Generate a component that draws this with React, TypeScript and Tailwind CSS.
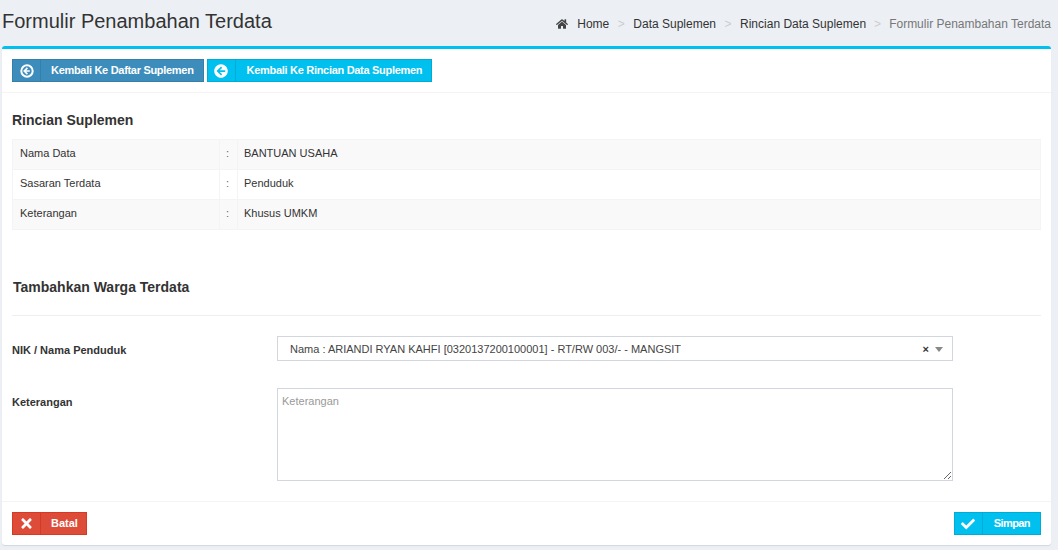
import React from "react";
import { FaHome, FaArrowCircleLeft, FaTimes, FaCheck } from "react-icons/fa";

function CircleLeftOutline() {
  return (
    <svg width="14" height="14" viewBox="0 0 14 14" aria-hidden="true">
      <circle cx="7" cy="7" r="5.7" fill="none" stroke="white" strokeWidth="2" />
      <path d="M7.4 3.9 4.3 7l3.1 3.1M4.6 7h5.2" fill="none" stroke="white" strokeWidth="1.7" />
    </svg>
  );
}

function IconButton({
  icon,
  label,
  colors,
  divider,
  textCls = "",
}: {
  icon: React.ReactNode;
  label: string;
  colors: string;
  divider: string;
  textCls?: string;
}) {
  return (
    <button className={`flex h-[23px] items-stretch border text-[11px] font-bold text-white ${colors}`}>
      <span className={`flex w-7 items-center justify-center border-r ${divider}`}>{icon}</span>
      <span className={`flex items-center ${textCls}`}>{label}</span>
    </button>
  );
}

const rows = [
  ["Nama Data", "BANTUAN USAHA", "bg-[#f9f9f9]"],
  ["Sasaran Terdata", "Penduduk", "bg-white"],
  ["Keterangan", "Khusus UMKM", "bg-[#f9f9f9]"],
];

export default function App() {
  return (
    <div
      className="h-[550px] w-[1058px] overflow-hidden bg-[#ecf0f5] text-[#333]"
      style={{ fontFamily: '"Liberation Sans", Arial, sans-serif' }}
    >
      <header className="flex h-[46px] items-start justify-between pl-[2px] pr-[7px]">
        <h1 className="pt-[8px] text-[20px] leading-[26px] font-normal">Formulir Penambahan Terdata</h1>
        <nav className="flex items-center pt-[17px] text-[12px] leading-[14px]">
          <FaHome className="mr-[9px] text-[12px] text-[#444]" />
          <span>Home</span>
          <span className="px-[8.5px] text-[#ccc]">&gt;</span>
          <span>Data Suplemen</span>
          <span className="px-[8.5px] text-[#ccc]">&gt;</span>
          <span>Rincian Data Suplemen</span>
          <span className="px-[8px] text-[#ccc]">&gt;</span>
          <span className="text-[#777]">Formulir Penambahan Terdata</span>
        </nav>
      </header>

      <main className="ml-[2px] flex h-[499px] w-[1049px] flex-col rounded-[3px] border-t-[3px] border-[#00c0ef] bg-white shadow-[0_1px_1px_rgba(0,0,0,0.1)]">
        <div className="flex h-[44px] gap-[3px] border-b border-[#f4f4f4] px-[10px] pt-[10px]">
          <IconButton
            icon={<CircleLeftOutline />}
            label="Kembali Ke Daftar Suplemen"
            colors="border-[#367fa9] bg-[#3c8dbc]"
            divider="border-[#367fa9]"
            textCls="pl-[10px] pr-[9px] tracking-[-0.3px]"
          />
          <IconButton
            icon={<FaArrowCircleLeft className="text-[14px]" />}
            label="Kembali Ke Rincian Data Suplemen"
            colors="border-[#00acd6] bg-[#00c0ef]"
            divider="border-[#00acd6]"
            textCls="pl-[11px] pr-[9px] tracking-[-0.3px]"
          />
        </div>

        <section className="px-[10px]">
          <h3 className="mt-[18px] text-[14px] leading-[18px] font-bold text-[#333]">Rincian Suplemen</h3>
          <table className="mt-[10px] w-[1029px] table-fixed border-collapse border border-[#f4f4f4] text-[11px] text-[#333]">
            <tbody>
              {rows.map(([k, v, bg]) => (
                <tr key={k} className={`h-[30px] ${bg}`}>
                  <td className="w-[207px] border border-[#f4f4f4] pb-[2px] pl-[7px]">{k}</td>
                  <td className="w-[18px] border border-[#f4f4f4] pb-[2px] pr-[2px] text-center text-[#666]">:</td>
                  <td className="border border-[#f4f4f4] pb-[2px] pl-[6px]">{v}</td>
                </tr>
              ))}
            </tbody>
          </table>

          <h3 className="mt-[48px] pl-[1px] text-[14px] leading-[18px] font-bold text-[#333]">Tambahkan Warga Terdata</h3>
          <div className="mt-[19px] w-[1029px] border-t border-[#eee]" />

          <form className="mt-[20px]">
            <div className="flex items-center">
              <label className="w-[265px] pt-[3px] text-[11px] font-bold text-[#333]">NIK / Nama Penduduk</label>
              <div className="flex h-[25px] w-[676px] items-center border border-[#d2d6de] pl-[12px] pr-[9px] pt-[1px] text-[11px] text-[#444]">
                <span className="flex-1">Nama : ARIANDI RYAN KAHFI [0320137200100001] - RT/RW 003/- - MANGSIT</span>
                <span className="mr-[6px] text-[11px] leading-none font-bold text-[#333]">×</span>
                <span className="mt-[1px] h-0 w-0 border-x-[4px] border-t-[5px] border-x-transparent border-t-[#888]" />
              </div>
            </div>
            <div className="mt-[27px] flex items-start">
              <label className="w-[265px] pt-[6px] text-[11px] font-bold text-[#333]">Keterangan</label>
              <textarea
                placeholder="Keterangan"
                className="h-[93px] w-[676px] border border-[#d2d6de] px-[4px] py-[6px] text-[11px] leading-[13px] outline-none placeholder:text-[#999]"
              />
            </div>
          </form>
        </section>

        <footer className="mt-[20px] flex flex-1 items-start justify-between border-t border-[#f4f4f4] px-[10px] pt-[10px]">
          <IconButton
            icon={<FaTimes className="text-[15px]" />}
            label="Batal"
            colors="border-[#d73925] bg-[#dd4b39]"
            divider="border-[#d73925]"
            textCls="pl-[10px] pr-[8px]"
          />
          <IconButton
            icon={<FaCheck className="text-[14px]" />}
            label="Simpan"
            colors="border-[#00acd6] bg-[#00c0ef]"
            divider="border-[#00acd6]"
            textCls="pl-[11px] pr-[10px] tracking-[-0.6px]"
          />
        </footer>
      </main>
    </div>
  );
}
